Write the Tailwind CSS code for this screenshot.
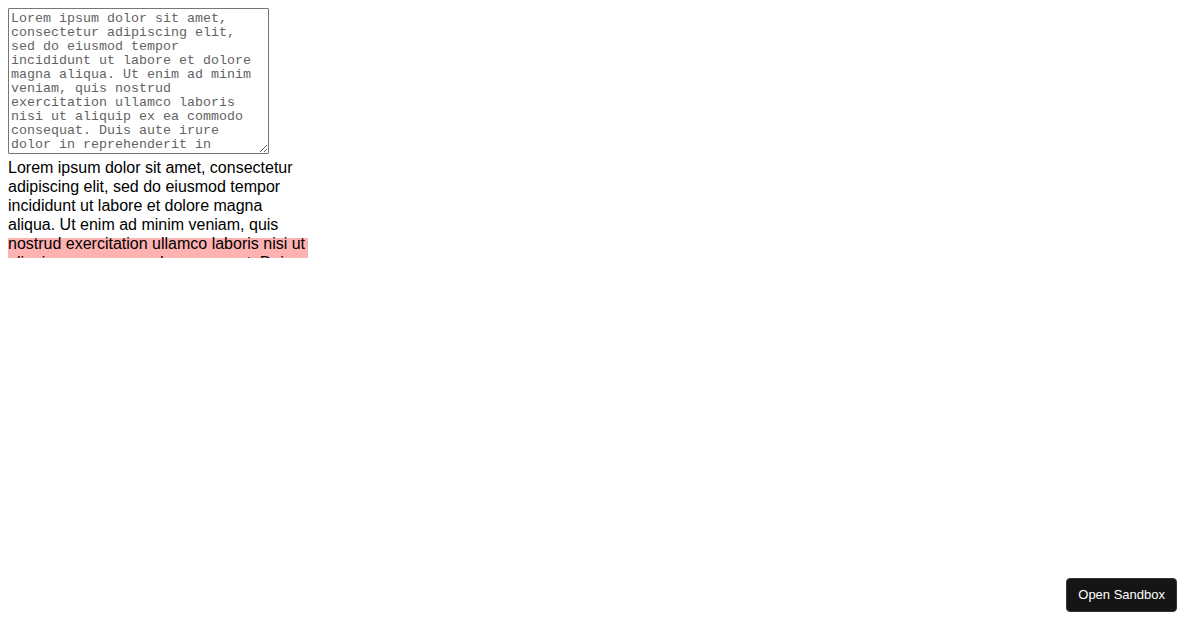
<!DOCTYPE html>
<html lang="en">
<head>
    <meta charset="UTF-8">
    <meta name="viewport" content="width=device-width, initial-scale=1.0">
    <title>Sandbox</title>
    <script src="https://cdn.jsdelivr.net/npm/@tailwindcss/browser@4"></script>
</head>
<body class="flex min-h-screen flex-col items-start bg-white p-2 font-['Liberation_Sans',sans-serif] text-black">
    <textarea rows="10" aria-label="Text" class="mb-1 w-[261px] resize overflow-hidden rounded-[1px] border border-[#767676] bg-white px-0.5 pt-[3px] pb-px font-['Liberation_Mono',monospace] text-[length:smaller] leading-[14px] text-[#636363]">Lorem ipsum dolor sit amet, consectetur adipiscing elit, sed do eiusmod tempor incididunt ut labore et dolore magna aliqua. Ut enim ad minim veniam, quis nostrud exercitation ullamco laboris nisi ut aliquip ex ea commodo consequat. Duis aute irure dolor in reprehenderit in</textarea>

    <div class="relative isolate h-[100px] w-[300px] overflow-hidden text-base leading-[19px]">
        <!-- highlight along the bottom edge, behind the text -->
        <div class="absolute inset-x-0 bottom-0 -z-10 h-5 bg-[#ffb2b2]"></div>
        <p>Lorem ipsum dolor sit amet, consectetur adipiscing elit, sed do eiusmod tempor incididunt ut labore et dolore magna aliqua. Ut enim ad minim veniam, quis nostrud exercitation ullamco laboris nisi ut aliquip ex ea commodo consequat. Duis</p>
    </div>

    <button type="button" class="fixed right-[23px] bottom-[18px] rounded border border-[#343434] bg-[#151515] px-[11px] py-2 text-[13px] leading-4 text-white">Open Sandbox</button>
</body>
</html>
